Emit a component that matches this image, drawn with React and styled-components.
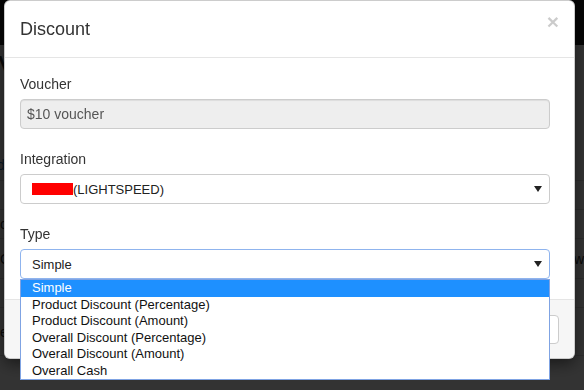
import React from 'react';
import styled, { createGlobalStyle } from 'styled-components';

const GlobalStyle = createGlobalStyle`
  html, body {
    margin: 0;
    padding: 0;
    overflow: hidden;
  }
  body {
    font-family: "Liberation Sans", Arial, sans-serif;
    font-size: 14px;
    color: #333;
    background: #fff;
  }
`;

const typeOptions = [
  'Simple',
  'Product Discount (Percentage)',
  'Product Discount (Amount)',
  'Overall Discount (Percentage)',
  'Overall Discount (Amount)',
  'Overall Cash',
];

// only slivers of the page behind the modal show at the edges
const tableRows = [
  { h: 29, left: '', right: '' },
  { h: 29, left: 'o', right: '' },
  { h: 40, left: 'C', right: 'ew' },
  { h: 29, left: '', right: '' },
  { h: 48, left: 'e', right: '' },
  { h: 40, left: '', right: '' },
];

const Arrow = () => (
  <svg width="8" height="6" viewBox="0 0 8 6">
    <path d="M0 0 L8 0 L4 6 Z" fill="#222" />
  </svg>
);

const App = () => {
  return (
    <>
      <GlobalStyle />
      <Page>
        <Navbar />
        <Heading>V</Heading>
        <PageLink>d</PageLink>
        <Table>
          {tableRows.map((row, i) => (
            <TableRow key={i} h={row.h}>
              <span>{row.left}</span>
              <span>{row.right}</span>
            </TableRow>
          ))}
        </Table>
      </Page>
      <Backdrop />

      <Modal>
        <Header>
          <Title>Discount</Title>
          <Close>×</Close>
        </Header>
        <Body>
          <FormGroup>
            <Label>Voucher</Label>
            <ReadonlyInput>$10 voucher</ReadonlyInput>
          </FormGroup>
          <FormGroup>
            <Label>Integration</Label>
            <SelectWrap>
              <Select>
                <span>
                  <Redacted />
                  (LIGHTSPEED)
                </span>
                <Arrow />
              </Select>
            </SelectWrap>
          </FormGroup>
          <FormGroup>
            <Label>Type</Label>
            <SelectWrap>
              <Select focused>
                <span>Simple</span>
                <Arrow />
              </Select>
              <OptionList>
                {typeOptions.map((opt, i) => (
                  <Option key={opt} active={i === 0}>{opt}</Option>
                ))}
              </OptionList>
            </SelectWrap>
          </FormGroup>
        </Body>
        <Footer>
          <Button>Close</Button>
          <Button>Save</Button>
        </Footer>
      </Modal>
    </>
  );
};

// page behind
const Page = styled.div`
  width: 584px;
  height: 390px;
  background: #fff;
`;
const Navbar = styled.div`
  height: 45px;
  background: #1a1a1a;
`;
const Heading = styled.h1`
  margin: 2px 0 0 -2px;
  font-size: 32px;
  line-height: 40px;
  font-weight: 400;
  color: #333;
`;
const PageLink = styled.div`
  margin-top: 68px;
  margin-left: -3px;
  line-height: 20px;
  color: #337ab7;
`;
const Table = styled.div`
  margin-top: 5px;
`;
const TableRow = styled.div`
  height: ${(p) => p.h}px;
  box-sizing: border-box;
  border-top: 1px solid #ddd;
  display: flex;
  align-items: center;
  justify-content: space-between;
  color: #333;
`;
const Backdrop = styled.div`
  position: fixed;
  inset: 0;
  background: rgba(0, 0, 0, 0.8);
`;

// modal
const Modal = styled.div`
  position: fixed;
  top: 0;
  left: 4px;
  width: 571px;
  box-sizing: border-box;
  background: #fff;
  border: 1px solid rgba(0, 0, 0, 0.2);
  border-radius: 6px;
  box-shadow: 0 5px 15px rgba(0, 0, 0, 0.5);
`;
const Header = styled.div`
  display: flex;
  justify-content: space-between;
  align-items: flex-start;
  padding: 15px;
  border-bottom: 1px solid #e5e5e5;
`;
const Title = styled.h4`
  margin: 0;
  font-size: 18px;
  font-weight: 400;
  line-height: 26px;
  color: #333;
`;
const Close = styled.span`
  font-size: 21px;
  font-weight: 700;
  line-height: 1;
  color: #000;
  opacity: 0.2;
  margin-top: -5px;
`;
const Body = styled.div`
  padding: 16px 24px 0 15px;
`;
const FormGroup = styled.div`
  margin-bottom: 20px;
`;
const Label = styled.label`
  display: block;
  margin-bottom: 5px;
  line-height: 20px;
  font-size: 14px;
  color: #333;
`;
const ReadonlyInput = styled.div`
  height: 30px;
  box-sizing: border-box;
  display: flex;
  align-items: center;
  padding: 0 6px;
  border: 1px solid #ccc;
  border-radius: 4px;
  background: #eee;
  color: #555;
  font-size: 14px;
  box-shadow: inset 0 1px 1px rgba(0, 0, 0, 0.075);
`;
const SelectWrap = styled.div`
  position: relative;
`;
const Select = styled.div`
  height: 30px;
  box-sizing: border-box;
  display: flex;
  align-items: center;
  justify-content: space-between;
  padding: 0 7px 0 11px;
  border: 1px solid ${(p) => (p.focused ? '#8fb4ee' : '#ccc')};
  border-radius: 4px;
  background: #fff;
  font-size: 13px;
  color: #222;
`;
const Redacted = styled.span`
  display: inline-block;
  width: 41px;
  height: 12px;
  background: #ff0000;
  vertical-align: -1px;
`;
const OptionList = styled.div`
  position: absolute;
  top: 100%;
  left: 0;
  right: 0;
  border: 1px solid #7fa3e3;
  background: #fff;
  z-index: 2;
`;
const Option = styled.div`
  height: 16.5px;
  line-height: 16.5px;
  padding-left: 11px;
  font-size: 13px;
  color: ${(p) => (p.active ? '#fff' : '#111')};
  background: ${(p) => (p.active ? '#1e90ff' : '#fff')};
`;
const Footer = styled.div`
  display: flex;
  justify-content: flex-end;
  gap: 5px;
  padding: 15px 15px 14px;
  border-top: 1px solid #e5e5e5;
  background: #f6f6f6;
  border-radius: 0 0 6px 6px;
`;
const Button = styled.button`
  height: 29px;
  padding: 0 12px;
  border: 1px solid #ccc;
  border-radius: 4px;
  background: #fff;
  color: #333;
  font-family: "Liberation Sans", Arial, sans-serif;
  font-size: 14px;
`;

export default App;
